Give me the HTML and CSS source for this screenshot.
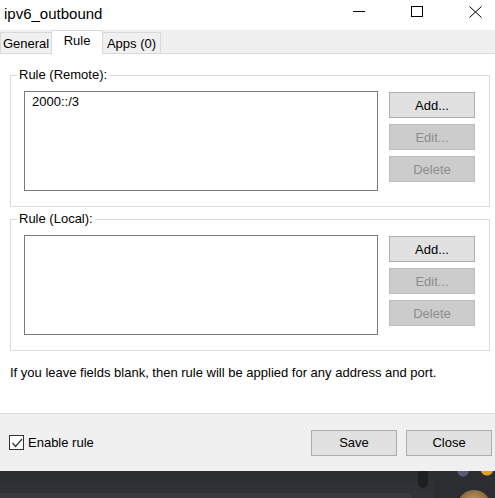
FILE: index.html
```html
<!DOCTYPE html>
<html lang="en">
<head>
    <meta charset="UTF-8" />
    <meta name="viewport" content="width=device-width, initial-scale=1.0">
    <title>ipv6_outbound</title>
    <link rel="stylesheet" href="styles.css">
</head>
<body>
    <div class="window">
        <div class="titlebar">
            <span class="title">ipv6_outbound</span>
            <div class="controls">
                <span class="ctl">
                    <svg width="12" height="12" viewBox="0 0 12 12"><line x1="0" y1="5.5" x2="12" y2="5.5" stroke="#000" stroke-width="1"/></svg>
                </span>
                <span class="ctl">
                    <svg width="12" height="12" viewBox="0 0 12 12"><rect x="0.5" y="0.5" width="11" height="10" fill="none" stroke="#000" stroke-width="1"/></svg>
                </span>
                <span class="ctl">
                    <svg width="13" height="12" viewBox="0 0 13 12"><path d="M0.5 0.5 L12.5 11.5 M12.5 0.5 L0.5 11.5" stroke="#000" stroke-width="1" fill="none"/></svg>
                </span>
            </div>
        </div>

        <div class="tabs">
            <span class="tab tab-general">General</span>
            <span class="tab tab-rule active">Rule</span>
            <span class="tab tab-apps">Apps (0)</span>
        </div>

        <div class="page">
            <fieldset class="group">
                <legend>Rule (Remote):</legend>
                <div class="list">2000::/3</div>
                <div class="actions">
                    <button class="btn">Add...</button>
                    <button class="btn" disabled>Edit...</button>
                    <button class="btn" disabled>Delete</button>
                </div>
            </fieldset>

            <fieldset class="group group-local">
                <legend>Rule (Local):</legend>
                <div class="list"></div>
                <div class="actions">
                    <button class="btn">Add...</button>
                    <button class="btn" disabled>Edit...</button>
                    <button class="btn" disabled>Delete</button>
                </div>
            </fieldset>

            <p class="hint">If you leave fields blank, then rule will be applied for any address and port.</p>
        </div>

        <div class="footer">
            <label class="check">
                <span class="box">
                    <svg width="12" height="12" viewBox="0 0 12 12"><polyline points="1.5,6 4.5,9.5 11,2" fill="none" stroke="#333" stroke-width="1.2"/></svg>
                </span>
                Enable rule
            </label>
            <div class="footer-buttons">
                <button class="btn">Save</button>
                <button class="btn">Close</button>
            </div>
        </div>
    </div>

    <div class="desktop">
        <div class="chat">
            <div class="scroll-row"><span class="scroll-pill"></span></div>
            <div class="chat-panel"></div>
        </div>
        <div class="side">
            <span class="avatar"></span>
        </div>
    </div>
</body>
</html>
```

FILE: styles.css
```css
* {
    box-sizing: border-box;
}

body {
    margin: 0;
    width: 495px;
    height: 498px;
    overflow: hidden;
    background-color: #2e3035;
    font-family: "Liberation Sans", Arial, sans-serif;
    font-size: 13px;
    color: #000;
}

.window {
    height: 471px;
    background-color: #fff;
    display: flex;
    flex-direction: column;
}

/* barra de titulo */
.titlebar {
    height: 30px;
    display: flex;
    align-items: center;
    flex-shrink: 0;
}

.title {
    flex: 1;
    padding-left: 4px;
    font-size: 15px;
    margin-top: -3px;
}

.controls {
    display: flex;
    flex-shrink: 0;
    margin-right: -9px;
}

.ctl {
    width: 58px;
    height: 30px;
    display: flex;
    align-items: center;
    justify-content: center;
    padding-bottom: 6px;
}

/* pestañas */
.tabs {
    height: 24px;
    flex-shrink: 0;
    background-color: #f0f0f0;
    border-bottom: 1px solid #d9d9d9;
    display: flex;
    align-items: flex-end;
}

.tab {
    height: 21px;
    border: 1px solid #d9d9d9;
    border-bottom: none;
    text-align: center;
    line-height: 21px;
    background-color: #f0f0f0;
}

.tab-general {
    width: 52px;
}

.tab-rule {
    width: 52px;
    margin-left: -1px;
}

.tab-apps {
    width: 59px;
    margin-left: -1px;
}

.tab.active {
    height: 24px;
    margin-bottom: -1px;
    background-color: #fff;
    line-height: 19px;
    position: relative;
    z-index: 1;
}

/* contenido */
.page {
    flex: 1;
    padding: 13px 5px 0 10px;
}

.group {
    margin: 0;
    padding: 8px 13px 15px;
    border: 1px solid #dcdcdc;
    display: flex;
    gap: 11px;
}

.group-local {
    margin-top: 4px;
}

.group legend {
    padding: 0 2px;
    margin-left: -7px;
    line-height: 16px;
}

.list {
    width: 354px;
    height: 100px;
    border: 1px solid #7a7a7a;
    background-color: #fff;
    padding: 2px 7px;
    line-height: 16px;
}

.actions {
    display: flex;
    flex-direction: column;
    gap: 6px;
    padding-top: 1px;
}

.btn {
    width: 86px;
    height: 26px;
    margin: 0;
    padding: 0;
    border: 1px solid #adadad;
    background-color: #e1e1e1;
    font-family: inherit;
    font-size: 13px;
    color: #000;
}

.btn:disabled {
    background-color: #cccccc;
    border-color: #bfbfbf;
    color: #8d8d8d;
}

.hint {
    margin: 14px 0 0;
    line-height: 16px;
}

/* pie */
.footer {
    height: 58px;
    flex-shrink: 0;
    background-color: #f0f0f0;
    border-top: 1px solid #dadada;
    display: flex;
    align-items: center;
    padding: 0 3px 0 9px;
}

.check {
    display: flex;
    align-items: center;
    gap: 4px;
}

.box {
    width: 15px;
    height: 15px;
    border: 1px solid #333;
    background-color: #fff;
    display: flex;
    align-items: center;
    justify-content: center;
}

.footer-buttons {
    margin-left: auto;
    display: flex;
    gap: 9px;
}

/* escritorio de fondo */
.desktop {
    height: 27px;
    display: flex;
    overflow: hidden;
}

.chat {
    flex: 1;
    display: flex;
    flex-direction: column;
    background: linear-gradient(#2b2d31, #313338);
}

.scroll-row {
    display: flex;
    justify-content: flex-end;
    padding-right: 5px;
}

.scroll-pill {
    width: 10px;
    height: 17px;
    background-color: #1e1f22;
    border-radius: 0 0 5px 5px;
}

.chat-panel {
    margin-top: 5px;
    width: 412px;
    flex: 1;
    background-color: #383a40;
    border-top-right-radius: 8px;
}

.side {
    width: 62px;
    overflow: hidden;
    background-color: #2b2d31;
    background-image:
        radial-gradient(circle at 30px 0, #5e5878 5px, transparent 6px),
        radial-gradient(circle at 54px -2px, #e2a020 6px, transparent 7px);
    padding: 19px 0 0 24px;
}

.avatar {
    display: block;
    width: 34px;
    height: 34px;
    border-radius: 50%;
    background: radial-gradient(circle at 50% 40%, #c9a06a, #7a5a30 70%, #3a2a18);
}
```
